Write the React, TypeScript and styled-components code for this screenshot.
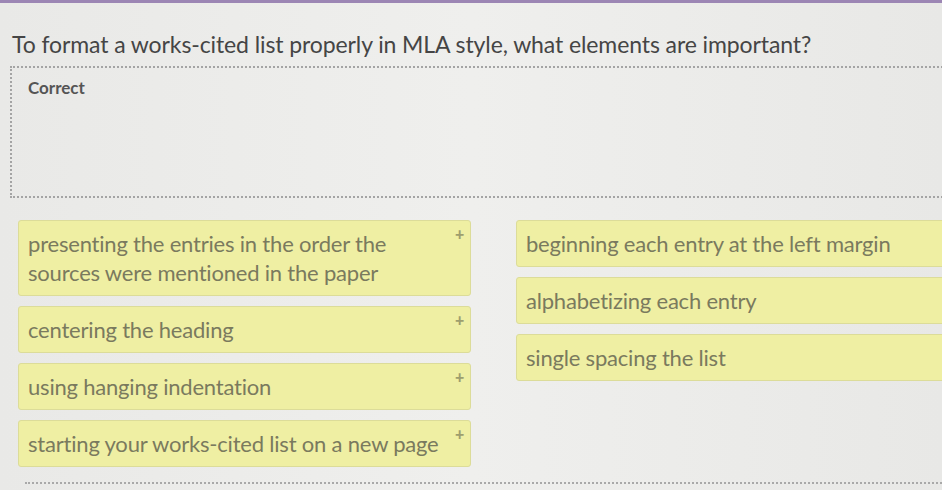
import styled, { createGlobalStyle } from "styled-components";

/**     STYLED      **/
const GlobalStyle = createGlobalStyle`
    html, body {
        margin: 0;
        padding: 0;
        background: #ebebe9;
        overflow: hidden;
    }
    body {
        font-family: Lato, "Open Sans", sans-serif;
    }
`

const StyledPage = styled.div`
    width: 942px;
    height: 490px;
    overflow: hidden;
    background: linear-gradient(90deg, #e9e9e7 0%, #efefed 50%, #e8e8e6 100%);
    border-top: 3px solid #9c86b4;
    box-sizing: border-box;
`

const StyledQuestion = styled.h1`
    margin: 0;
    padding: 26px 0 0 12px;
    font-size: 23px;
    font-weight: 400;
    color: #454545;
    letter-spacing: -0.1px;
    line-height: 30px;
`

const StyledDropZone = styled.div`
    margin: 7px 0 0 10px;
    width: 960px;
    height: 132px;
    border: 2px dotted #a4a4a4;
    border-right: none;
    box-sizing: border-box;
    padding: 9px 16px;
`

const StyledZoneLabel = styled.div`
    font-size: 17px;
    font-weight: 700;
    color: #555;
`

const StyledColumns = styled.div`
    display: grid;
    grid-template-columns: 453px 440px;
    column-gap: 45px;
    padding: 22px 0 0 18px;
    align-items: start;
`

const StyledColumn = styled.div`
    display: flex;
    flex-direction: column;
    gap: 10px;
`

const StyledCard = styled.div<{ $draggable?: boolean }>`
    position: relative;
    background: #efefa3;
    border: 1px solid #dcdc99;
    border-radius: 3px;
    padding: 8px ${p => (p.$draggable ? "24px" : "10px")} 8px 9px;
    min-height: 46px;
    box-sizing: border-box;
    font-size: 22px;
    line-height: 29px;
    color: #7a7a5e;
    letter-spacing: -0.2px;
    margin-right: ${p => (p.$draggable ? "0" : "-40px")};
`

const StyledPlus = styled.span`
    position: absolute;
    top: 6px;
    right: 6px;
    font-size: 16px;
    font-weight: 900;
    line-height: 13px;
    color: #9e9e6e;
`

const StyledBottomRule = styled.div`
    margin: 15px 0 0 25px;
    border-top: 2px dotted #a9a9a9;
`

/**     STYLED      **/

const leftItems = [
    ["presenting the entries in the order the", "sources were mentioned in the paper"],
    ["centering the heading"],
    ["using hanging indentation"],
    ["starting your works-cited list on a new page"],
]

const rightItems = [
    "beginning each entry at the left margin",
    "alphabetizing each entry",
    "single spacing the list",
]

export default function App() {
    return (
        <>
            <GlobalStyle/>
            <StyledPage>
                <StyledQuestion>
                    To format a works-cited list properly in MLA style, what elements are important?
                </StyledQuestion>
                <StyledDropZone>
                    <StyledZoneLabel>Correct</StyledZoneLabel>
                </StyledDropZone>
                <StyledColumns>
                    <StyledColumn>
                        {leftItems.map(lines => (
                            <StyledCard key={lines[0]} $draggable>
                                {lines.map((line, i) => (
                                    <div key={i}>{line}</div>
                                ))}
                                <StyledPlus>+</StyledPlus>
                            </StyledCard>
                        ))}
                    </StyledColumn>
                    <StyledColumn>
                        {rightItems.map(item => (
                            <StyledCard key={item}>{item}</StyledCard>
                        ))}
                    </StyledColumn>
                </StyledColumns>
                <StyledBottomRule/>
            </StyledPage>
        </>
    )
}
